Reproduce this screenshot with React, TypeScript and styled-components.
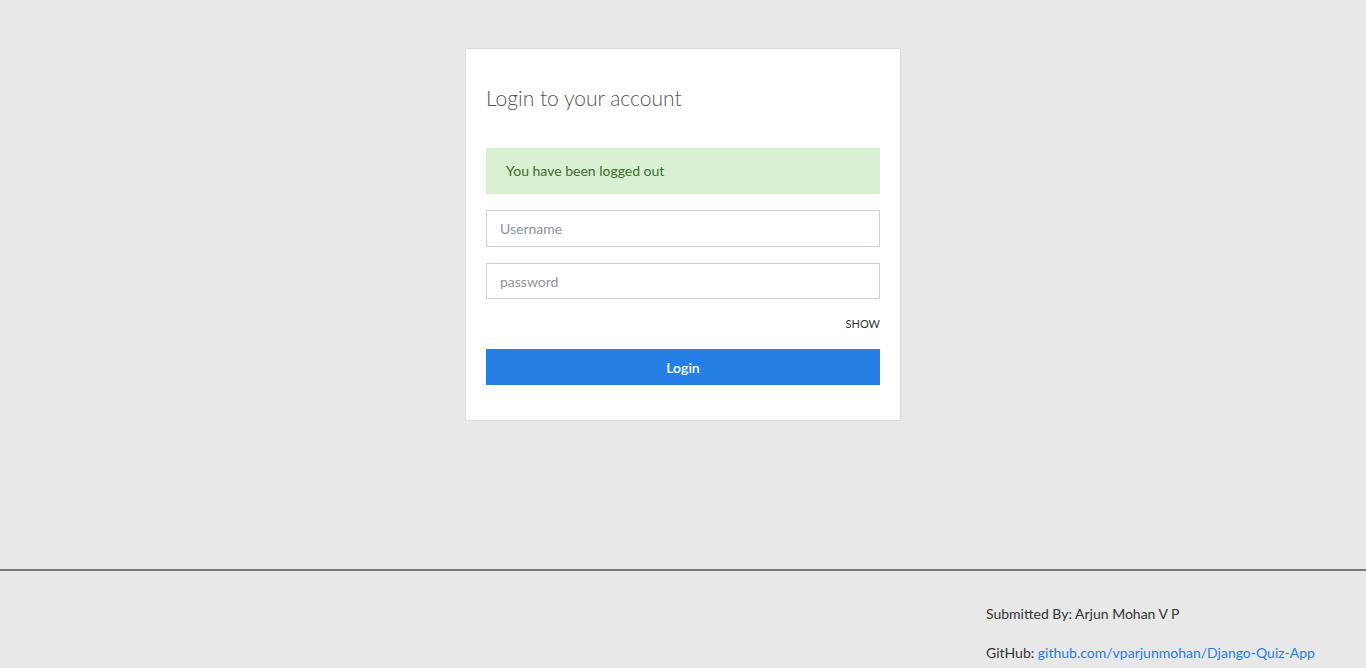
import React from "react";
import styled, { createGlobalStyle } from "styled-components";

const Global = createGlobalStyle`
  html, body { margin: 0; padding: 0; background: #e8e8e8; }
  body { font-family: Lato, "Open Sans", sans-serif; color: #333; font-size: 14px; }
  * { box-sizing: border-box; }
`;

const Page = styled.div`
  display: flex;
  flex-direction: column;
  min-height: 668px;
`;

const Main = styled.main`
  height: 569px;
  padding-top: 48px;
  display: flex;
  justify-content: center;
  align-items: flex-start;
`;

const Card = styled.div`
  width: 436px;
  background: #fff;
  border: 1px solid #dcdcdc;
  padding: 27px 20px 35px;
`;

const Title = styled.h2`
  margin: 0 0 28px;
  font-size: 21px;
  font-weight: 300;
  color: #555;
  line-height: 44px;
`;

const Alert = styled.div`
  background: #d9f0d2;
  color: #3c6d2e;
  height: 46px;
  padding: 0 20px 1px;
  display: flex;
  align-items: center;
  font-size: 14px;
  margin-bottom: 16px;
`;

const Input = styled.input<{ $h: number; $last?: boolean }>`
  display: block;
  width: 100%;
  height: ${(p) => p.$h}px;
  border: 1px solid #ccd0d7;
  padding: 0 13px;
  font-family: inherit;
  font-size: 14px;
  color: #333;
  margin-bottom: ${(p) => (p.$last ? 0 : 16)}px;
  outline: none;
  &::placeholder { color: #8d939c; }
`;

const ShowRow = styled.div`
  display: flex;
  justify-content: flex-end;
  font-size: 11px;
  color: #333;
  margin-top: 19px;
  margin-bottom: 19px;
  line-height: 12px;
`;

const Button = styled.button`
  display: block;
  width: 100%;
  height: 36px;
  border: none;
  background: #2680e3;
  color: #fff;
  font-family: inherit;
  font-size: 14px;
  font-weight: 600;
  cursor: pointer;
`;

const Footer = styled.footer`
  border-top: 2px solid #7a7a7a;
  display: grid;
  grid-template-columns: 1fr 380px;
  padding-top: 33px;
`;

const FooterText = styled.div`
  grid-column: 2;
  font-size: 14px;
  color: #333;
  line-height: 20px;
  p { margin: 0 0 19px; }
  a { color: #2a7ae2; text-decoration: none; }
`;

export default function App() {
  return (
    <Page>
      <Global />
      <Main>
        <Card>
          <Title>Login to your account</Title>
          <Alert>You have been logged out</Alert>
          <Input $h={37} placeholder="Username" />
          <Input $h={36} $last type="password" placeholder="password" />
          <ShowRow>SHOW</ShowRow>
          <Button>Login</Button>
        </Card>
      </Main>
      <Footer>
        <FooterText>
          <p>Submitted By: Arjun Mohan V P</p>
          <p>
            GitHub: <a href="#">github.com/vparjunmohan/Django-Quiz-App</a>
          </p>
        </FooterText>
      </Footer>
    </Page>
  );
}
